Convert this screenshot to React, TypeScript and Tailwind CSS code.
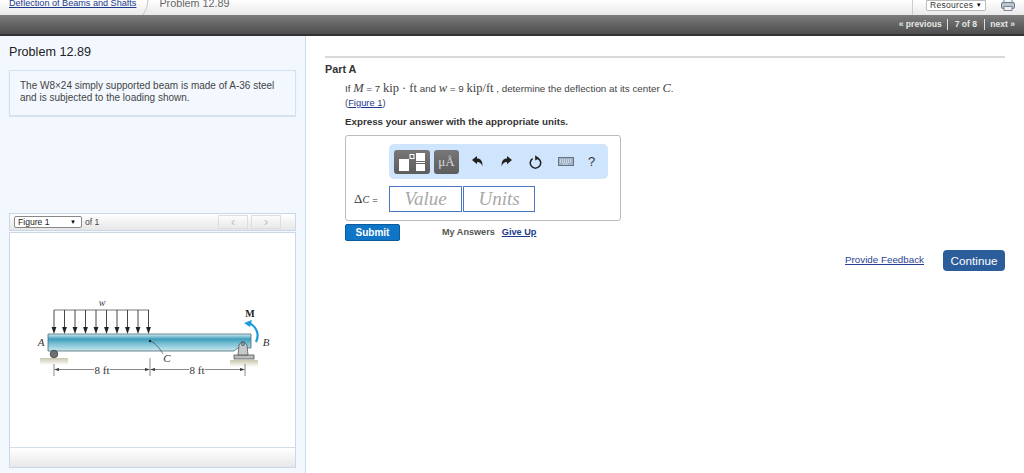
import React from 'react';

const sans = 'font-["Liberation_Sans",Arial,sans-serif]';
const serif = 'font-["Liberation_Serif",serif]';

const Arrow = ({ x }: { x: number }) => (
  <g>
    <line x1={x} y1={310} x2={x} y2={329} stroke="#333" strokeWidth={0.9} />
    <polygon points={`${x - 2.4},327 ${x + 2.4},327 ${x},334`} fill="#222" />
  </g>
);

const BeamFigure = () => (
  <svg viewBox="10 233 285 214" className="w-[285px] h-[214px] block">
    <defs>
      <linearGradient id="beam" x1="0" y1="0" x2="0" y2="1">
        <stop offset="0" stopColor="#d3ecf3" />
        <stop offset="0.3" stopColor="#3f9dbb" />
        <stop offset="0.55" stopColor="#74bdd3" />
        <stop offset="1" stopColor="#cbe7ef" />
      </linearGradient>
      <linearGradient id="ground" x1="0" y1="0" x2="0" y2="1">
        <stop offset="0" stopColor="#c9c7ae" />
        <stop offset="1" stopColor="#ffffff" />
      </linearGradient>
    </defs>
    <line x1={54} y1={310} x2={149} y2={310} stroke="#555" strokeWidth={0.8} />
    {[54, 64.5, 75, 85.5, 96, 106.5, 117, 127.5, 138, 148.5].map((x) => (
      <Arrow key={x} x={x} />
    ))}
    <text x={102} y={306} fontSize={10} fontStyle="italic" textAnchor="middle" fontFamily="Liberation Serif" fill="#444">w</text>
    <text x={250} y={317} fontSize={10} fontWeight="bold" textAnchor="middle" fontFamily="Liberation Serif" fill="#222">M</text>
    <text x={41} y={346} fontSize={11} fontStyle="italic" textAnchor="middle" fontFamily="Liberation Serif" fill="#333">A</text>
    <text x={266} y={346} fontSize={11} fontStyle="italic" textAnchor="middle" fontFamily="Liberation Serif" fill="#333">B</text>
    <text x={167} y={362} fontSize={11} fontStyle="italic" textAnchor="middle" fontFamily="Liberation Serif" fill="#333">C</text>

    <path d="M48 334 H251 V348 H238 L234 351 H48 Z" fill="url(#beam)" stroke="#4a6a75" strokeWidth={0.8} />
    <circle cx={150} cy={341} r={1.2} fill="#222" />
    <path d="M150 341 C156 343 160 349 163 354" fill="none" stroke="#333" strokeWidth={0.6} />

    <rect x={40} y={358} width={28} height={7} fill="url(#ground)" />
    <circle cx={54} cy={354} r={3.8} fill="#6b7377" stroke="#333" strokeWidth={0.7} />

    <rect x={230} y={360} width={28} height={7} fill="url(#ground)" />
    <rect x={234} y={355} width={20} height={4} fill="#b8bdbd" stroke="#444" strokeWidth={0.7} />
    <path d="M238 355 L239 345 Q243 338 247 345 L248 355 Z" fill="#c4c9c9" stroke="#444" strokeWidth={0.7} />
    <circle cx={243} cy={344} r={1.6} fill="#6cb9d1" stroke="#333" strokeWidth={0.6} />

    <path d="M256 342 C260 334 256 326 249 323" fill="none" stroke="#1d9ade" strokeWidth={2.2} />
    <polygon points="244,323 252,320 250,327" fill="#1d9ade" />

    <g stroke="#555" strokeWidth={0.7}>
      <line x1={54} y1={364} x2={54} y2={376} />
      <line x1={150} y1={358} x2={150} y2={376} />
      <line x1={245} y1={364} x2={245} y2={376} />
      <line x1={56} y1={369.5} x2={94} y2={369.5} />
      <line x1={110} y1={369.5} x2={148} y2={369.5} />
      <line x1={152} y1={369.5} x2={189} y2={369.5} />
      <line x1={205} y1={369.5} x2={243} y2={369.5} />
    </g>
    <polygon points="54,369.5 59,368 59,371" fill="#333" />
    <polygon points="150,369.5 145,368 145,371" fill="#333" />
    <polygon points="150,369.5 155,368 155,371" fill="#333" />
    <polygon points="245,369.5 240,368 240,371" fill="#333" />
    <text x={102} y={373.5} fontSize={11} textAnchor="middle" fontFamily="Liberation Serif" fill="#333">8 ft</text>
    <text x={197} y={373.5} fontSize={11} textAnchor="middle" fontFamily="Liberation Serif" fill="#333">8 ft</text>
  </svg>
);

const Printer = () => (
  <svg width="14" height="13" viewBox="0 0 14 13">
    <rect x="3" y="0.5" width="8" height="5" fill="#f4f6f8" stroke="#7d8a96" />
    <rect x="0.5" y="4.5" width="13" height="6" rx="1.5" fill="#b9c6d2" stroke="#6f7d8a" />
    <rect x="3" y="8.5" width="8" height="4" fill="#eef2f5" stroke="#7d8a96" />
  </svg>
);

const Templates = () => (
  <svg width="27" height="18" viewBox="0 0 27 18">
    <rect x="0" y="6" width="10" height="12" fill="#fff" />
    <rect x="11" y="1.5" width="4" height="4" fill="none" stroke="#fff" />
    <rect x="17" y="0" width="9" height="8" fill="#fff" />
    <rect x="17" y="9" width="9" height="1" fill="#fff" />
    <rect x="17" y="11" width="9" height="7" fill="#fff" />
  </svg>
);

const Undo = ({ flip }: { flip?: boolean }) => (
  <svg width="11" height="11" viewBox="0 0 11 11" className={flip ? '-scale-x-100' : ''}>
    <path d="M0 4 L5 0 V2.6 C8.8 2.6 10.6 5 10.4 10.5 C9.6 7.6 8 6 5 6 V8.2 Z" fill="#222" />
  </svg>
);

const Reset = () => (
  <svg width="13" height="14" viewBox="0 0 13 14">
    <path d="M8.6 3.2 A5.2 5.2 0 1 1 3.6 3.6" fill="none" stroke="#222" strokeWidth="1.5" />
    <polygon points="6.2,0.2 10.2,3.2 6.2,5.6" fill="#222" />
  </svg>
);

const Keyboard = () => (
  <svg width="16" height="9" viewBox="0 0 16 9">
    <rect x="0.5" y="0.5" width="15" height="8" fill="#9fb2c6" stroke="#66727f" />
    <path d="M2 3 H14 M2 5 H14 M5 7 H11" stroke="#eef3f8" strokeWidth="1" strokeDasharray="1 1" />
  </svg>
);

export default function App() {
  return (
    <div className={`${sans} w-[1024px] h-[473px] overflow-hidden bg-white flex flex-col`}>
      <div className="h-[15px] overflow-hidden flex items-start bg-gradient-to-b from-white to-[#e9e9e9]">
        <a className="ml-[9px] -mt-[4px] text-[9.1px] leading-[14px] text-[#1c3a8c] underline">Deflection of Beams and Shafts</a>
        <svg width="10" height="15" viewBox="0 0 10 15" className="ml-[5px]">
          <path d="M2 15 L6 7 L7 0" fill="none" stroke="#c8c8c8" />
        </svg>
        <span className="ml-[8px] -mt-[5px] text-[10.8px] leading-[16px] text-[#666]">Problem 12.89</span>
        <div className="ml-auto h-[15px] border-l border-[#ccc] pl-[13px] flex items-start">
          <div className="w-[60px] h-[11px] bg-white border border-[#bbb] rounded-b-[2px] flex items-center justify-between px-[3px] text-[8.5px] text-[#333] tracking-[0.3px]">
            Resources <span className="text-[6px] text-black">▼</span>
          </div>
          <div className="ml-[15px] mr-[9px] -mt-[2px]"><Printer /></div>
        </div>
      </div>

      <div className="h-[21px] shrink-0 border-b-2 border-[#333] bg-gradient-to-b from-[#7c7c7c] to-[#4d4d4d] flex items-center justify-end pr-[9px] text-[8.6px] font-bold text-[#e6e6e6]">
        <span>« previous</span>
        <span className="ml-[5px] w-px h-[11px] bg-[#ddd]" />
        <span className="ml-[7px]">7 of 8</span>
        <span className="ml-[7px] w-px h-[11px] bg-[#ddd]" />
        <span className="ml-[5px]">next »</span>
      </div>

      <div className="flex-1 flex min-h-0">
        <div className="w-[306px] shrink-0 bg-[#f3f8ff] border-r border-[#cfdcec] pl-[9px] pr-[9px] flex flex-col">
          <h2 className="mt-[9px] text-[12.6px] leading-[15px] text-[#222]">Problem 12.89</h2>
          <div className="mt-[10px] h-[46px] w-[287px] border border-[#d3e0ee] px-[10px] pt-[9px] text-[10px] leading-[12px] text-[#444] shadow-[0_1px_1px_#dde4ec]">
            The W8×24 simply supported beam is made of A-36 steel
            <br />
            and is subjected to the loading shown.
          </div>
          <div className="mt-[97px] h-[18px] w-[287px] border border-[#c9d8e8] bg-gradient-to-b from-white to-[#e6e6e6] flex items-center pl-[4px] pr-[14px] text-[8.6px] text-[#444]">
            <div className="w-[68px] h-[12px] bg-white border border-[#888] rounded-[2px] flex items-center justify-between pl-[3px] pr-[5px] text-[#222]">
              Figure 1 <span className="text-[6px] text-black">▼</span>
            </div>
            <span className="ml-[3px]">of 1</span>
            <div className="ml-auto w-[30px] h-[14px] border border-[#ddd] flex items-center justify-center text-[12px] leading-none text-[#bbb]">‹</div>
            <div className="ml-[3px] w-[30px] h-[14px] border border-[#ddd] flex items-center justify-center text-[12px] leading-none text-[#bbb]">›</div>
          </div>
          <div className="mt-[1px] w-[287px] h-[236px] border border-[#c9d8e8] flex flex-col bg-white">
            <div className="flex-1 min-h-0"><BeamFigure /></div>
            <div className="h-[20px] shrink-0 border-t border-[#d3dde8] bg-gradient-to-b from-white to-[#e8e8e8]" />
          </div>
        </div>

        <div className="flex-1 pl-[19px] pr-[19px] pt-[20px]">
          <div className="h-[2px] bg-[#d9d9d9]" />
          <div className="mt-[5px] text-[10.8px] leading-[12px] font-bold text-[#333]">Part A</div>
          <div className="ml-[20px]">
            <p className="mt-[6px] text-[9.8px] leading-[14px] text-[#444] whitespace-nowrap">
              If <i className={`${serif} text-[12.5px]`}>M</i> = 7 <span className={`${serif} text-[12.5px]`}>kip · ft</span> and <i className={`${serif} text-[12.5px]`}>w</i> = 9 <span className={`${serif} text-[12.5px]`}>kip/ft</span> , determine the deflection at its center <i className={`${serif} text-[12.5px]`}>C</i>.
              <br />
              <span className="text-[9.4px]">(<a className="text-[#1c3a8c] underline">Figure 1</a>)</span>
            </p>
            <p className="mt-[6px] text-[9.77px] leading-[12px] font-bold text-[#333]">Express your answer with the appropriate units.</p>
            <div className="mt-[7px] w-[276px] h-[86px] border border-[#bbb] rounded-[3px] pl-[43px] pt-[8px]">
              <div className="w-[219px] h-[35px] bg-[#cfe4fd] rounded-[5px] flex items-center pl-[5px]">
                <div className="w-[36px] h-[24px] rounded-[3px] bg-gradient-to-b from-[#777] to-[#5d5d5d] flex items-center justify-center"><Templates /></div>
                <div className={`${serif} ml-[4px] w-[25px] h-[24px] rounded-[3px] bg-gradient-to-b from-[#777] to-[#5d5d5d] flex items-center justify-center text-[13px] text-[#ddd]`}>μÅ</div>
                <div className="ml-[13px]"><Undo /></div>
                <div className="ml-[18px]"><Undo flip /></div>
                <div className="ml-[17px]"><Reset /></div>
                <div className="ml-[16px]"><Keyboard /></div>
                <span className="ml-[14px] text-[13px] text-[#333]">?</span>
              </div>
              <div className="mt-[7px] flex items-center -ml-[35px]">
                <span className={`${serif} w-[35px] text-[13px] text-[#333] whitespace-nowrap`}>Δ<i className="text-[10px]">C</i> <span className={`${sans} text-[9.5px]`}>=</span></span>
                <div className={`${serif} w-[73px] h-[26px] border border-[#4a76c4] flex items-center justify-center italic text-[19px] text-[#a8a8a8]`}>Value</div>
                <div className={`${serif} ml-[1px] w-[72px] h-[26px] border border-[#4a76c4] flex items-center justify-center italic text-[19px] text-[#a8a8a8]`}>Units</div>
              </div>
            </div>
            <div className="mt-[3px] flex items-center">
              <button className="w-[55px] h-[17px] rounded-[2px] bg-[#0f75c7] border border-[#0b5a9c] text-[10px] font-bold text-white">Submit</button>
              <span className="ml-[42px] text-[9.1px] font-bold text-[#555]">My Answers</span>
              <a className="ml-[7px] text-[9.2px] font-bold text-[#1c3a8c] underline">Give Up</a>
            </div>
          </div>
          <div className="mt-[9px] flex items-center justify-end">
            <a className="text-[9.8px] text-[#2a3f95] underline">Provide Feedback</a>
            <button className="ml-[19px] w-[62px] h-[21px] rounded-[4px] bg-[#2b5d9b] text-[11.7px] text-white">Continue</button>
          </div>
        </div>
      </div>
    </div>
  );
}
